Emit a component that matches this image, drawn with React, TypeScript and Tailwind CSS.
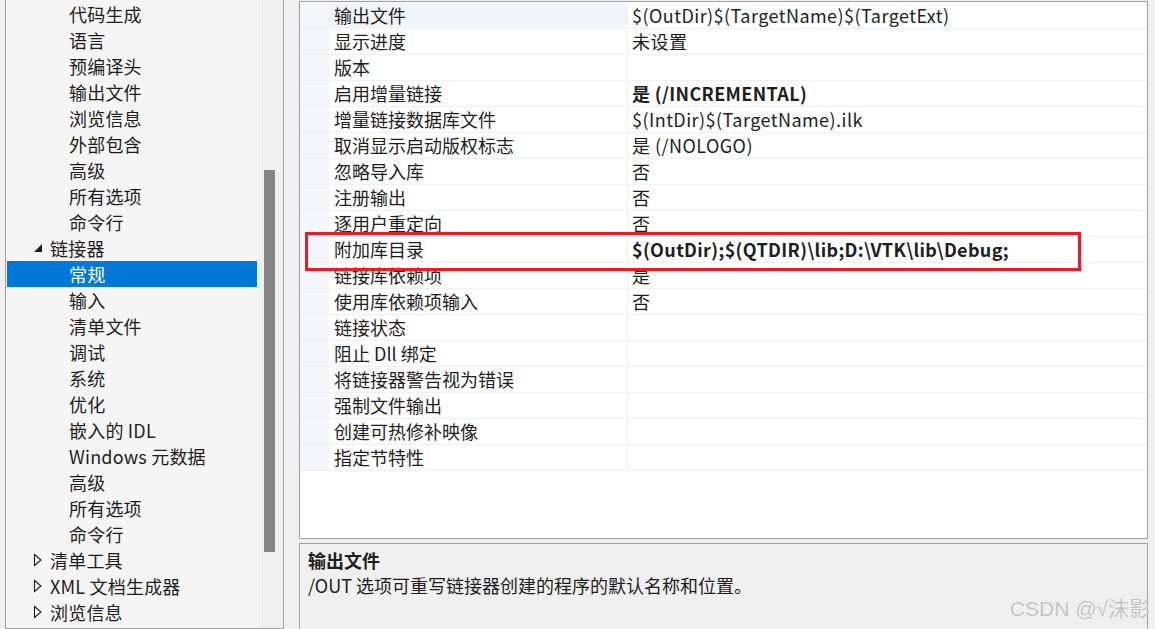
import React from "react";

// ---------- data ----------

type TreeItem = { label: string; level: 1 | 2; state?: "open" | "closed"; selected?: boolean };

const tree: TreeItem[] = [
  { label: "代码生成", level: 2 },
  { label: "语言", level: 2 },
  { label: "预编译头", level: 2 },
  { label: "输出文件", level: 2 },
  { label: "浏览信息", level: 2 },
  { label: "外部包含", level: 2 },
  { label: "高级", level: 2 },
  { label: "所有选项", level: 2 },
  { label: "命令行", level: 2 },
  { label: "链接器", level: 1, state: "open" },
  { label: "常规", level: 2, selected: true },
  { label: "输入", level: 2 },
  { label: "清单文件", level: 2 },
  { label: "调试", level: 2 },
  { label: "系统", level: 2 },
  { label: "优化", level: 2 },
  { label: "嵌入的 IDL", level: 2 },
  { label: "Windows 元数据", level: 2 },
  { label: "高级", level: 2 },
  { label: "所有选项", level: 2 },
  { label: "命令行", level: 2 },
  { label: "清单工具", level: 1, state: "closed" },
  { label: "XML 文档生成器", level: 1, state: "closed" },
  { label: "浏览信息", level: 1, state: "closed" },
];

type Prop = { name: string; value?: string; bold?: boolean; boxed?: boolean };

const props: Prop[] = [
  { name: "输出文件", value: "$(OutDir)$(TargetName)$(TargetExt)" },
  { name: "显示进度", value: "未设置" },
  { name: "版本" },
  { name: "启用增量链接", value: "是 (/INCREMENTAL)", bold: true },
  { name: "增量链接数据库文件", value: "$(IntDir)$(TargetName).ilk" },
  { name: "取消显示启动版权标志", value: "是 (/NOLOGO)" },
  { name: "忽略导入库", value: "否" },
  { name: "注册输出", value: "否" },
  { name: "逐用户重定向", value: "否" },
  { name: "附加库目录", value: "$(OutDir);$(QTDIR)\\lib;D:\\VTK\\lib\\Debug;", bold: true, boxed: true },
  { name: "链接库依赖项", value: "是" },
  { name: "使用库依赖项输入", value: "否" },
  { name: "链接状态" },
  { name: "阻止 Dll 绑定" },
  { name: "将链接器警告视为错误" },
  { name: "强制文件输出" },
  { name: "创建可热修补映像" },
  { name: "指定节特性" },
];

// ---------- bits ----------

function Arrow({ state }: { state: "open" | "closed" }) {
  if (state === "open") {
    return (
      <svg width="10" height="10" viewBox="0 0 10 10" className="shrink-0">
        <path d="M9 1 L9 9 L1 9 Z" fill="#1e1e1e" />
      </svg>
    );
  }
  return (
    <svg width="10" height="14" viewBox="0 0 10 14" className="shrink-0">
      <path d="M1.5 1.5 L8 7 L1.5 12.5 Z" fill="none" stroke="#1e1e1e" strokeWidth="1.1" />
    </svg>
  );
}

function TreeRow({ item }: { item: TreeItem }) {
  const base = "h-[26px] leading-[26px] flex items-center whitespace-nowrap";
  if (item.level === 1) {
    return (
      <div className={`${base} text-[#1e1e1e]`}>
        <div className="w-[43px] flex justify-end pr-[7px]">
          <Arrow state={item.state ?? "closed"} />
        </div>
        <span className="tracking-[0.2px]">{item.label}</span>
      </div>
    );
  }
  return (
    <div className={`${base} pl-[62px] tracking-[0.2px] ${item.selected ? "bg-[#0078d7] text-white" : "text-[#1e1e1e]"}`}>
      {item.label}
    </div>
  );
}

function PropRow({ p, first }: { p: Prop; first: boolean }) {
  return (
    <div className="relative h-[26px] flex border-b border-[#eef2f8]">
      <div className="w-[29px] bg-[#f4f6fa]" />
      <div className={`w-[298px] pl-[5px] leading-[25px] whitespace-nowrap ${first ? "bg-[#f1f4f9]" : ""}`}>{p.name}</div>
      <div
        className={`flex-1 pl-[4px] leading-[25px] whitespace-nowrap border-l border-[#eef2f8] ${
          p.bold ? "font-bold tracking-[0.35px]" : "tracking-[0.45px]"
        }`}
      >
        {p.value ?? ""}
      </div>
      {p.boxed && (
        <div className="absolute z-10 left-[5px] top-[-5px] w-[776px] h-[39px] border-[3px] border-[#ea1c26] pointer-events-none" />
      )}
    </div>
  );
}

// ---------- page ----------

export default function App() {
  return (
    <div className="relative w-[1155px] h-[629px] bg-[#f0f0f0] flex overflow-hidden font-['Noto_Sans_CJK_SC',sans-serif] text-[18px] text-[#1e1e1e]">
      {/* left tree pane */}
      <div className="ml-[5px] w-[279px] h-[629px] flex border-l border-r border-b border-[#a0a0a0]">
        <div className="w-[251px] bg-[#f5f5f5] pt-[1px] pl-[1px]">
          {tree.map((t, i) => (
            <TreeRow key={i} item={t} />
          ))}
        </div>
        <div className="w-[26px] bg-[#f0f0f0] border-l border-[#fafafa]">
          <div className="mt-[170px] ml-[6px] w-[11px] h-[382px] bg-[#858585]" />
        </div>
      </div>

      {/* right side */}
      <div className="ml-[15px] w-[849px] flex flex-col">
        <div className="mt-[1px] h-[538px] bg-white border border-[#a0a0a0] pt-[1px]">
          {props.map((p, i) => (
            <PropRow key={i} p={p} first={i === 0} />
          ))}
        </div>
        <div className="mt-[4px] flex-1 border-t border-l border-r border-[#a0a0a0] bg-[#f0f0f0] pl-[8px] pt-[4px]">
          <div className="font-bold leading-[25px]">输出文件</div>
          <div className="leading-[25px]">/OUT 选项可重写链接器创建的程序的默认名称和位置。</div>
        </div>
      </div>

      <div className="absolute z-20 right-[5px] bottom-[5px] text-[21px] text-[#c4c4c4] font-['Liberation_Sans','Noto_Sans_CJK_SC',sans-serif] [text-shadow:0_0_1px_#ffffff]">
        CSDN @√沫影
      </div>
    </div>
  );
}
